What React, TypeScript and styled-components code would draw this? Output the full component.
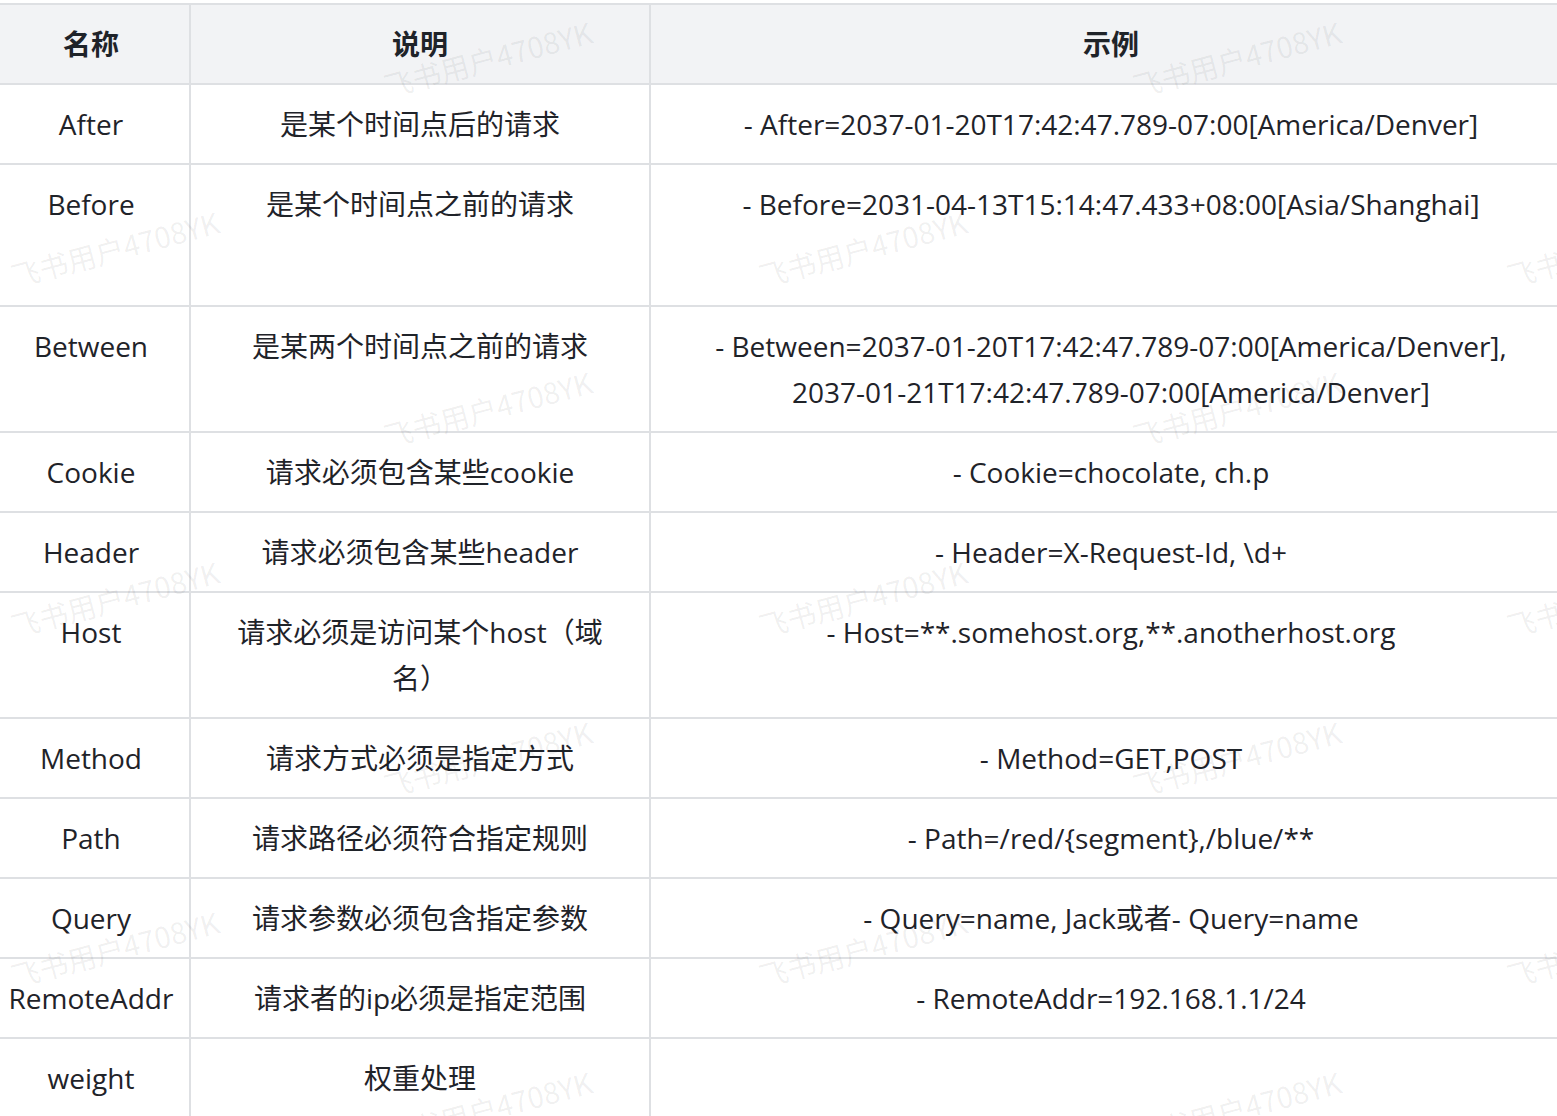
import React from 'react';
import styled, { createGlobalStyle } from "styled-components";

type RowType = {
    name: string;
    desc: string[];
    example: string[];
    tall?: boolean;
}

const rows: RowType[] = [
    { name: "After", desc: ["是某个时间点后的请求"], example: ["- After=2037-01-20T17:42:47.789-07:00[America/Denver]"] },
    { name: "Before", desc: ["是某个时间点之前的请求"], example: ["- Before=2031-04-13T15:14:47.433+08:00[Asia/Shanghai]"], tall: true },
    { name: "Between", desc: ["是某两个时间点之前的请求"], example: ["- Between=2037-01-20T17:42:47.789-07:00[America/Denver],", "2037-01-21T17:42:47.789-07:00[America/Denver]"] },
    { name: "Cookie", desc: ["请求必须包含某些cookie"], example: ["- Cookie=chocolate, ch.p"] },
    { name: "Header", desc: ["请求必须包含某些header"], example: ["- Header=X-Request-Id, \\d+"] },
    { name: "Host", desc: ["请求必须是访问某个host（域", "名）"], example: ["- Host=**.somehost.org,**.anotherhost.org"] },
    { name: "Method", desc: ["请求方式必须是指定方式"], example: ["- Method=GET,POST"] },
    { name: "Path", desc: ["请求路径必须符合指定规则"], example: ["- Path=/red/{segment},/blue/**"] },
    { name: "Query", desc: ["请求参数必须包含指定参数"], example: ["- Query=name, Jack或者- Query=name"] },
    { name: "RemoteAddr", desc: ["请求者的ip必须是指定范围"], example: ["- RemoteAddr=192.168.1.1/24"] },
    { name: "weight", desc: ["权重处理"], example: [] },
];

// bottom-left anchor of each watermark
const marks: [number, number][] = [
    [388, 100], [1137, 100],
    [15, 290], [763, 290], [1511, 290],
    [388, 450], [1137, 450],
    [15, 640], [763, 640], [1511, 640],
    [388, 800], [1137, 800],
    [15, 990], [763, 990], [1511, 990],
    [388, 1150], [1137, 1150],
];

export default function App() {
    return (
        <Page>
            <GlobalStyle/>
            <Table>
                <colgroup>
                    <col style={{ width: 198 }}/>
                    <col style={{ width: 460 }}/>
                    <col style={{ width: 922 }}/>
                </colgroup>
                <thead>
                    <tr>
                        <Th>名称</Th>
                        <Th>说明</Th>
                        <Th>示例</Th>
                    </tr>
                </thead>
                <tbody>
                    {rows.map(r => (
                        <Row key={r.name} $tall={r.tall}>
                            <Td>{r.name}</Td>
                            <Td>{r.desc.map(l => <Line key={l}>{l}</Line>)}</Td>
                            <Td>{r.example.map(l => <Line key={l}>{l}</Line>)}</Td>
                        </Row>
                    ))}
                </tbody>
            </Table>
            <Watermarks>
                {marks.map(([x, y]) => (
                    <Mark key={x + "-" + y} style={{ left: x, top: y - 29 }}>飞书用户4708YK</Mark>
                ))}
            </Watermarks>
        </Page>
    );
}

const GlobalStyle = createGlobalStyle`
    html, body {
        margin: 0;
        padding: 0;
        background: #ffffff;
        overflow: hidden;
    }
`

const Page = styled.div`
    position: relative;
    width: 1557px;
    height: 1116px;
    overflow: hidden;
    padding-top: 3px;
    box-sizing: border-box;
    font-family: "Open Sans", "Noto Sans CJK SC", sans-serif;
    color: #1f2329;
`

const Table = styled.table`
    margin-left: -9px;
    width: 1580px;
    table-layout: fixed;
    border-collapse: collapse;
    font-size: 28px;
    line-height: 46px;
`

const Th = styled.th`
    background-color: #f2f3f5;
    border: 2px solid #dee0e3;
    padding: 16px 8px;
    height: 46px;
    font-weight: 700;
    text-align: center;
    vertical-align: top;
`

const Row = styled.tr<{ $tall?: boolean }>`
    height: ${props => props.$tall ? "142px" : "auto"};
`

const Td = styled.td`
    border: 2px solid #dee0e3;
    padding: 16px 8px;
    text-align: center;
    vertical-align: top;
    font-weight: 400;
`

const Line = styled.div``

const Watermarks = styled.div`
    position: absolute;
    inset: 0;
    pointer-events: none;
`

const Mark = styled.span`
    position: absolute;
    font-family: "Noto Sans CJK SC", sans-serif;
    font-size: 29px;
    line-height: 29px;
    white-space: nowrap;
    color: rgba(31, 35, 41, 0.07);
    transform: rotate(-15deg);
    transform-origin: 0 100%;
`
